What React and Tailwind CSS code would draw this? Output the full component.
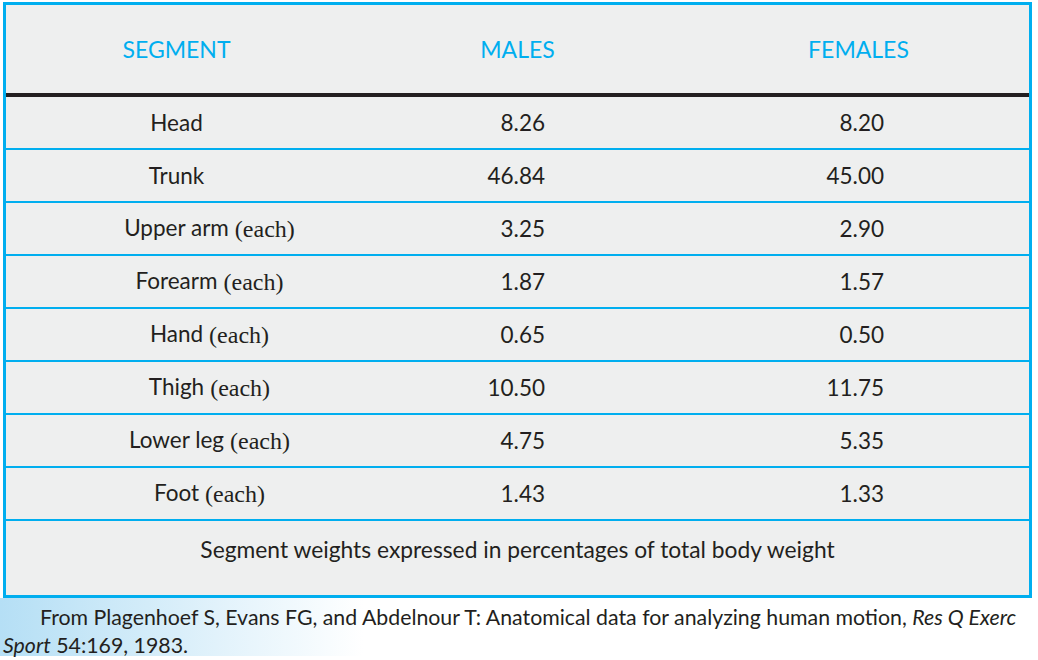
import React from 'react';

const rows = [
  { name: 'Head', each: false, m: '8.26', f: '8.20' },
  { name: 'Trunk', each: false, m: '46.84', f: '45.00' },
  { name: 'Upper arm', each: true, m: '3.25', f: '2.90' },
  { name: 'Forearm', each: true, m: '1.87', f: '1.57' },
  { name: 'Hand', each: true, m: '0.65', f: '0.50' },
  { name: 'Thigh', each: true, m: '10.50', f: '11.75' },
  { name: 'Lower leg', each: true, m: '4.75', f: '5.35' },
  { name: 'Foot', each: true, m: '1.43', f: '1.33' },
];

const sans = "font-['Lato','Open_Sans',sans-serif]";

export default function App() {
  return (
    <div className={`w-[1038px] h-[660px] bg-white text-[#231f20] ${sans}`}>
      <div className="pt-[2px] pl-[3px]">
        <div className="w-[1029px] border-[3px] border-[#00aeef] bg-[#eeefef]">
          {/* header */}
          <div className="grid grid-cols-3 h-[92px] border-b-4 border-[#231f20] text-[23px] text-[#00aeef] items-center">
            <div className="text-center">SEGMENT</div>
            <div className="text-center">MALES</div>
            <div className="text-center">FEMALES</div>
          </div>

          {rows.map((r) => (
            <div key={r.name} className="grid grid-cols-3 h-[53px] border-b-2 border-[#00aeef] text-[22.5px] items-center">
              <div className="grid grid-cols-[1fr_auto_1fr] whitespace-nowrap">
                <span />
                <span>{r.name}</span>
                <span className="text-left">
                  {r.each && (
                    <span className="font-['Liberation_Serif',serif] text-[24px]">&nbsp;(each)</span>
                  )}
                </span>
              </div>
              <div className="text-right pr-[143px]">{r.m}</div>
              <div className="text-right pr-[145px]">{r.f}</div>
            </div>
          ))}

          {/* footer */}
          <div className="h-[74px] pt-[11px] text-center text-[22.8px]">
            Segment weights expressed in percentages of total body weight
          </div>
        </div>
      </div>

      <div className="h-[58px] bg-[linear-gradient(to_right,#b5dff5_0%,#ffffff_35%)] pt-[5px] pl-[3px] text-[21.3px] leading-[28px]">
        <p className="indent-[37px] pr-[8px]">
          From Plagenhoef S, Evans FG, and Abdelnour T: Anatomical data for analyzing human motion, <i>Res Q Exerc</i>{' '}
          <i>Sport</i> 54:169, 1983.
        </p>
      </div>
    </div>
  );
}
